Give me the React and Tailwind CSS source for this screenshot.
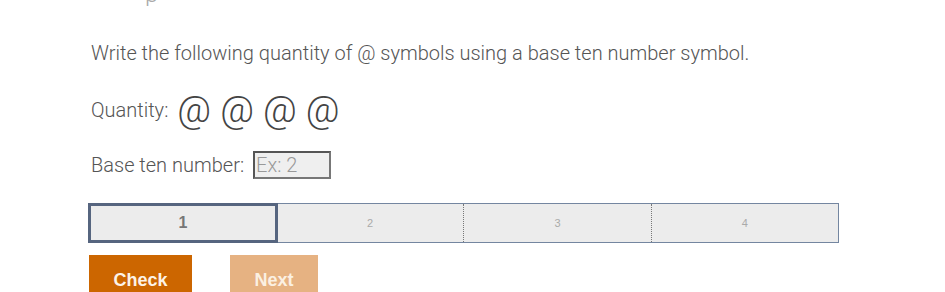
const App = () => {
  const cells = ['1', '2', '3', '4'];

  return (
    <div className="w-[945px] h-[292px] overflow-hidden bg-white font-['Roboto',sans-serif] font-light text-[#555]">
      <div className="pl-[91px] pr-[106px]">
        <div className="h-[6px] overflow-hidden relative">
          <span className="absolute left-[54px] -top-[24px] text-[24px] text-[#aaa]">p</span>
        </div>

        <p className="mt-[35px] text-[20px] leading-[24px]">
          Write the following quantity of @ symbols using a base ten number symbol.
        </p>

        <div className="mt-[25px] flex items-center h-[40px]">
          <span className="text-[20px]">Quantity:</span>
          <span className="ml-[9px] text-[37px] leading-[40px] text-[#444]">@ @ @ @</span>
        </div>

        <div className="mt-[19px] flex items-center h-[32px]">
          <span className="text-[20px]">Base ten number:</span>
          <input
            type="text"
            placeholder="Ex: 2"
            className="ml-[9px] w-[78px] h-[28px] border-2 border-t-[#555] border-l-[#555] border-r-[#777] border-b-[#777] bg-[#efefef] px-[1px] text-[20px] font-light placeholder:text-[#999] outline-none"
          />
        </div>
      </div>

      <div className="ml-[88px] mt-[22px] w-[751px] h-[40px] flex bg-[#ececec] border border-[#7486a0]">
        {cells.map((c, i) => (
          <div
            key={c}
            className={
              i === 0
                ? 'w-[190px] -m-px h-[40px] border-[3px] border-[#56657f] flex items-center justify-center text-[16px] font-bold text-[#777] font-["Liberation_Sans",sans-serif]'
                : i === 1
                ? 'flex-1 flex items-center justify-center text-[11px] text-[#aaa] font-["Liberation_Sans",sans-serif] font-normal'
                : 'flex-1 border-l border-dotted border-[#777] flex items-center justify-center text-[11px] text-[#aaa] font-["Liberation_Sans",sans-serif] font-normal'
            }
          >
            {c}
          </div>
        ))}
      </div>

      <div className="ml-[89px] mt-[12px] flex gap-[38px] font-['Liberation_Sans',sans-serif] font-bold">
        <button className="w-[103px] h-[50px] bg-[#cc6600] text-[#fdf3e6] text-[18px] pt-[1px]">Check</button>
        <button className="w-[88px] h-[50px] bg-[#e6b282] text-[#fbf0e2] text-[18px] pt-[1px]">Next</button>
      </div>
    </div>
  );
};

export default App;
